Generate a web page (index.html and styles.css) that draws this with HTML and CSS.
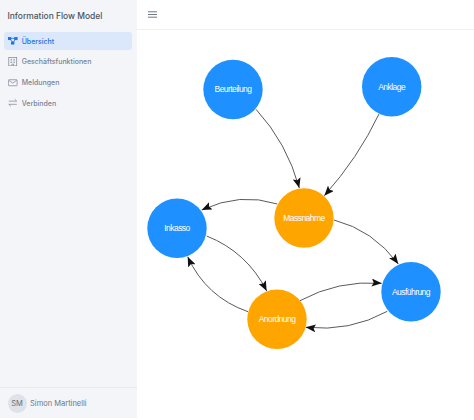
FILE: index.html
```html
<!DOCTYPE html>
<html lang="de">
<head>
<meta charset="utf-8">
<title>Information Flow Model</title>
<link rel="stylesheet" href="styles.css">
</head>
<body>
<div class="app">
  <aside class="sidebar">
    <div class="brand">Information Flow Model</div>
    <nav class="nav">
      <a class="item active">
        <svg class="icon" viewBox="0 0 12 12" fill="none" stroke="currentColor" stroke-width="1"><rect x="0.5" y="2" width="3" height="2.6" fill="currentColor"/><rect x="8.5" y="2" width="3" height="2.6" fill="currentColor"/><rect x="4.5" y="7.6" width="3" height="2.6" fill="currentColor"/><path d="M3.5 3h5M3 4.2l2.6 3.4M9 4.2L7 7.6"/></svg>
        <span>Übersicht</span>
      </a>
      <a class="item">
        <svg class="icon" viewBox="0 0 12 12" fill="none" stroke="currentColor" stroke-width="0.9"><rect x="1" y="0.8" width="10" height="10.4"/><path d="M3.2 3h2M6.8 3h2M3.2 5h2M6.8 5h2M3.2 7h2M6.8 7h2M5 11V9h2v2"/></svg>
        <span>Geschäftsfunktionen</span>
      </a>
      <a class="item">
        <svg class="icon" viewBox="0 0 12 12" fill="none" stroke="currentColor" stroke-width="0.9"><rect x="0.5" y="2.2" width="11" height="7.6" rx="0.8"/><path d="M1 3l5 3.4L11 3"/></svg>
        <span>Meldungen</span>
      </a>
      <a class="item">
        <svg class="icon" viewBox="0 0 12 12" fill="none" stroke="currentColor" stroke-width="0.9"><path d="M1 4h10M8.5 1.6L11 4M11 8H1M3.5 10.4L1 8"/></svg>
        <span>Verbinden</span>
      </a>
    </nav>
    <div class="user">
      <span class="avatar">SM</span>
      <span class="user-name">Simon Martinelli</span>
    </div>
  </aside>
  <main class="main">
    <header class="topbar">
      <svg class="menu" viewBox="0 0 9 7" fill="none" stroke="currentColor" stroke-width="0.9"><path d="M0 0.8h9M0 3.5h9M0 6.2h9"/></svg>
    </header>
    <div class="canvas">
      <svg class="graph" viewBox="137 30 337 388" width="337" height="388">
        <defs>
          <marker id="arrow" viewBox="0 0 10 8" refX="10" refY="4" markerWidth="10" markerHeight="8" markerUnits="userSpaceOnUse" orient="auto">
            <path d="M0 0L10 4L0 8L2 4Z" fill="#111"/>
          </marker>
        </defs>
        <g class="edges">
          <path marker-end="url(#arrow)" d="M256 109.3Q287 143 299.3 188"/>
          <path marker-end="url(#arrow)" d="M379 114Q358 158 324.3 195.7"/>
          <path marker-end="url(#arrow)" d="M277.3 204Q240 192 201.7 210"/>
          <path marker-end="url(#arrow)" d="M206.7 236Q247 252 266.7 291"/>
          <path marker-end="url(#arrow)" d="M248 311.7Q206 297 187.7 256.7"/>
          <path marker-end="url(#arrow)" d="M334 220Q373 230 398.3 264"/>
          <path marker-end="url(#arrow)" d="M300 300.7Q338 280 381.7 283.3"/>
          <path marker-end="url(#arrow)" d="M387.3 311.3Q350 332 305.7 327.3"/>
        </g>
        <g class="nodes">
          <circle class="blue" cx="233" cy="89.5" r="29.7"/>
          <circle class="blue" cx="391.7" cy="86.7" r="29.7"/>
          <circle class="orange" cx="304" cy="218" r="29.7"/>
          <circle class="blue" cx="177" cy="228.3" r="29.7"/>
          <circle class="orange" cx="277" cy="319.3" r="29.7"/>
          <circle class="blue" cx="411" cy="291.7" r="29.7"/>
        </g>
        <g class="labels">
          <text x="233" y="92.3">Beurteilung</text>
          <text x="391.7" y="89.5">Anklage</text>
          <text x="304" y="220.8">Massnahme</text>
          <text x="177" y="231.1">Inkasso</text>
          <text x="277" y="322.1">Anordnung</text>
          <text x="411" y="294.5">Ausführung</text>
        </g>
      </svg>
    </div>
  </main>
</div>
</body>
</html>
```
FILE: styles.css
```css
* { box-sizing: border-box; }
html, body { margin: 0; padding: 0; background: #fff; }
body { width: 474px; height: 420px; overflow: hidden; font-family: Inter, "Noto Sans", sans-serif; }
.app { display: flex; height: 418px; }
.sidebar { width: 137px; flex: none; display: flex; flex-direction: column; background: #f3f5f8; color: #6b7686; }
.brand { height: 31px; padding: 0 7.5px; display: flex; align-items: center; font-size: 8.45px; font-weight: 500; color: #4a5462; }
.nav { flex: 1; display: flex; flex-direction: column; gap: 2.7px; padding: 1px 5px 1px 4px; }
.item { height: 18px; padding: 0 4px; display: flex; align-items: center; gap: 4.2px; border-radius: 3px; font-size: 7px; font-weight: 500; color: #7a8494; }
.item.active { background: #dbe8fb; color: #1c6fe0; }
.icon { width: 9.5px; height: 9.5px; flex: none; }
.user { height: 31px; border-top: 1px solid #e6e9ee; padding: 0 7.5px; display: flex; align-items: center; gap: 3.5px; }
.avatar { width: 19px; height: 19px; border-radius: 50%; background: #dfe3e9; display: flex; align-items: center; justify-content: center; font-size: 7.5px; color: #5f6a79; }
.user-name { font-size: 7.5px; color: #6b7686; }
.main { flex: 1; display: flex; flex-direction: column; min-width: 0; }
.topbar { height: 30px; flex: none; border-bottom: 1px solid #eef0f3; padding: 0 11px 1px; display: flex; align-items: center; color: #5f6a79; }
.menu { width: 9px; height: 7px; }
.canvas { flex: 1; min-height: 0; }
.graph { display: block; }
.edges path { fill: none; stroke: #5a5a5a; stroke-width: 1; }
.blue { fill: #1e90ff; }
.orange { fill: #ffa500; }
.labels text { font-family: "Liberation Sans", Arial, sans-serif; font-size: 8.5px; letter-spacing: -0.55px; fill: #fff; text-anchor: middle; }
```
